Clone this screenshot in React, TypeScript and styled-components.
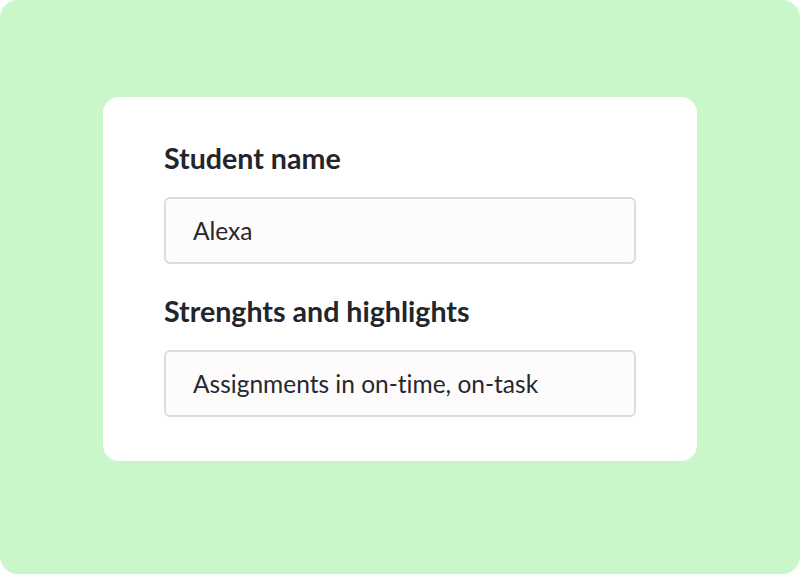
import React from "react";
import styled, { createGlobalStyle } from "styled-components";

const GlobalStyle = createGlobalStyle`
  html, body {
    margin: 0;
    padding: 0;
    background: #ffffff;
  }
  body {
    font-family: Lato, "Noto Sans", sans-serif;
    font-variant-ligatures: none;
  }
`;

const Stage = styled.div`
  width: 800px;
  height: 574px;
  box-sizing: border-box;
  background: #c9f7c9;
  border-radius: 18px;
  display: flex;
  justify-content: center;
  align-items: flex-start;
  padding-top: 97px;
`;

const Card = styled.div`
  width: 594px;
  box-sizing: border-box;
  background: #ffffff;
  border-radius: 16px;
  padding: 45px 61px 44px;
  display: flex;
  flex-direction: column;
`;

const Label = styled.label<{ $spaced?: boolean }>`
  font-size: 28.6px;
  line-height: 32px;
  font-weight: 700;
  color: #22252b;
  margin-top: ${(p) => (p.$spaced ? "31px" : "0")};
  margin-bottom: 23px;
`;

const Field = styled.div`
  height: 67px;
  box-sizing: border-box;
  border: 2px solid #dcdcdc;
  border-radius: 6px;
  background: #fdfbfc;
  padding: 0 27px;
  display: flex;
  align-items: center;
  font-size: 24.5px;
  color: #26282c;
`;

type FieldProps = {
  label: string;
  value: string;
  spaced?: boolean;
};

const FormField = (props: FieldProps) => {
  return (
    <>
      <Label $spaced={props.spaced}>{props.label}</Label>
      <Field>{props.value}</Field>
    </>
  );
};

export default function App() {
  return (
    <>
      <GlobalStyle />
      <Stage>
        <Card>
          <FormField label={"Student name"} value={"Alexa"} />
          <FormField
            label={"Strenghts and highlights"}
            value={"Assignments in on-time, on-task"}
            spaced
          />
        </Card>
      </Stage>
    </>
  );
}
